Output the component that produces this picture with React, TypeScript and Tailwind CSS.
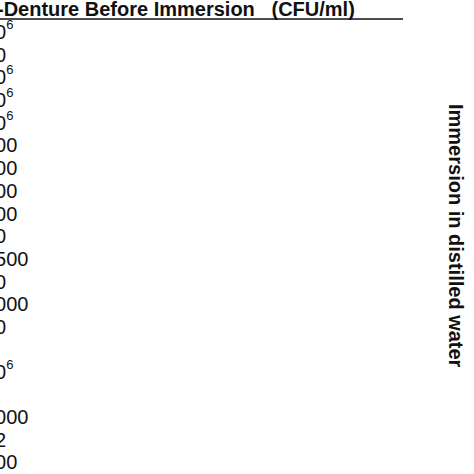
import React from "react";

type Row = { base: string; sup?: string };

const rows: Row[] = [
  { base: "10", sup: "6" },
  { base: "10" },
  { base: "10", sup: "6" },
  { base: "10", sup: "6" },
  { base: "10", sup: "6" },
  { base: "100" },
  { base: "100" },
  { base: "100" },
  { base: "100" },
  { base: "10" },
  { base: "1500" },
  { base: "10" },
  { base: "1000" },
  { base: "10" },
  { base: "" },
  { base: "10", sup: "6" },
  { base: "" },
  { base: "1000" },
  { base: "12" },
  { base: "100" },
];

export default function App() {
  return (
    <div
      className="w-[474px] h-[474px] overflow-hidden bg-white text-[#111] flex flex-col"
      style={{ fontFamily: '"Liberation Sans", Arial, sans-serif' }}
    >
      <div className="w-[403px] h-[20px] border-b-2 border-[#4d4d4d] shrink-0">
        <div className="ml-[-3px] text-[20px] leading-[18px] font-bold whitespace-pre">
          -Denture Before Immersion   (CFU/ml)
        </div>
      </div>
      <div className="flex flex-1 min-h-0">
        <div className="flex-1 flex flex-col pt-[1px]">
          {rows.map((r, i) => (
            <div key={i} className="h-[22.7px] text-[20px] leading-[22.7px] ml-[-16px] whitespace-pre">
              {r.base}
              {r.sup && (
                <span className="relative -top-[10px] text-[13px] leading-none align-baseline">{r.sup}</span>
              )}
            </div>
          ))}
        </div>
        <div className="w-[36px] flex items-center justify-center pb-[22px]">
          <div className="[writing-mode:vertical-rl] text-[20px] font-bold leading-none whitespace-nowrap">
            Immersion in distilled water
          </div>
        </div>
      </div>
    </div>
  );
}
